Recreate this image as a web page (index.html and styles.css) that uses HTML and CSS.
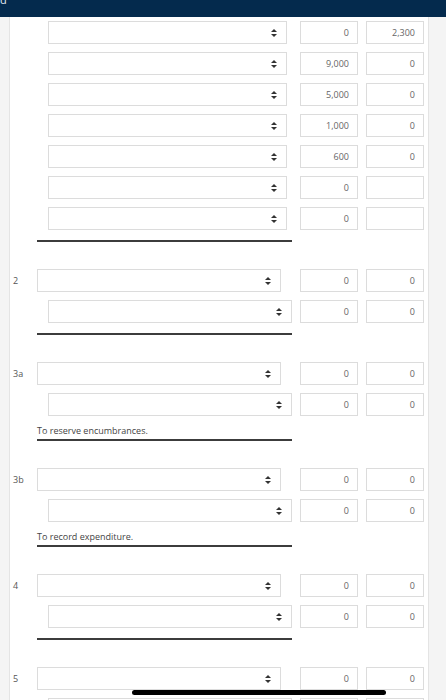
FILE: index.html
```html
<!DOCTYPE html>
<html lang="en">
<head>
<meta charset="utf-8">
<link rel="stylesheet" href="styles.css">
</head>
<body>
<header class="topbar"><span class="topglyph">d</span></header>
<main class="panel">
  <section class="block first">
    <div class="row"><div class="label"></div><div class="selcol"><div class="select sub narrow"><span class="arrow"></span></div></div><div class="inp">0</div><div class="inp">2,300</div></div>
    <div class="row"><div class="label"></div><div class="selcol"><div class="select sub narrow"><span class="arrow"></span></div></div><div class="inp">9,000</div><div class="inp">0</div></div>
    <div class="row"><div class="label"></div><div class="selcol"><div class="select sub narrow"><span class="arrow"></span></div></div><div class="inp">5,000</div><div class="inp">0</div></div>
    <div class="row"><div class="label"></div><div class="selcol"><div class="select sub narrow"><span class="arrow"></span></div></div><div class="inp">1,000</div><div class="inp">0</div></div>
    <div class="row"><div class="label"></div><div class="selcol"><div class="select sub narrow"><span class="arrow"></span></div></div><div class="inp">600</div><div class="inp">0</div></div>
    <div class="row"><div class="label"></div><div class="selcol"><div class="select sub narrow"><span class="arrow"></span></div></div><div class="inp">0</div><div class="inp"></div></div>
    <div class="row last"><div class="label"></div><div class="selcol"><div class="select sub narrow"><span class="arrow"></span></div></div><div class="inp">0</div><div class="inp"></div></div>
    <div class="foot"><div class="rule"></div></div>
  </section>

  <section class="block">
    <div class="row"><div class="label">2</div><div class="selcol"><div class="select"><span class="arrow"></span></div></div><div class="inp">0</div><div class="inp">0</div></div>
    <div class="row last"><div class="label"></div><div class="selcol"><div class="select sub"><span class="arrow"></span></div></div><div class="inp">0</div><div class="inp">0</div></div>
    <div class="foot"><div class="rule"></div></div>
  </section>

  <section class="block">
    <div class="row"><div class="label">3a</div><div class="selcol"><div class="select"><span class="arrow"></span></div></div><div class="inp">0</div><div class="inp">0</div></div>
    <div class="row last"><div class="label"></div><div class="selcol"><div class="select sub"><span class="arrow"></span></div></div><div class="inp">0</div><div class="inp">0</div></div>
    <div class="foot withtext"><p class="note">To reserve encumbrances.</p><div class="rule"></div></div>
  </section>

  <section class="block">
    <div class="row"><div class="label">3b</div><div class="selcol"><div class="select"><span class="arrow"></span></div></div><div class="inp">0</div><div class="inp">0</div></div>
    <div class="row last"><div class="label"></div><div class="selcol"><div class="select sub"><span class="arrow"></span></div></div><div class="inp">0</div><div class="inp">0</div></div>
    <div class="foot withtext"><p class="note">To record expenditure.</p><div class="rule"></div></div>
  </section>

  <section class="block">
    <div class="row"><div class="label">4</div><div class="selcol"><div class="select"><span class="arrow"></span></div></div><div class="inp">0</div><div class="inp">0</div></div>
    <div class="row last"><div class="label"></div><div class="selcol"><div class="select sub"><span class="arrow"></span></div></div><div class="inp">0</div><div class="inp">0</div></div>
    <div class="foot"><div class="rule"></div></div>
  </section>

  <section class="block">
    <div class="row"><div class="label">5</div><div class="selcol"><div class="select"><span class="arrow"></span></div></div><div class="inp">0</div><div class="inp">0</div></div>
    <div class="row last"><div class="label"></div><div class="selcol"><div class="select sub"><span class="arrow"></span></div></div><div class="inp"></div><div class="inp"></div></div>
  </section>
</main>
<div class="homebar"></div>
</body>
</html>
```

FILE: styles.css
```css
html, body {
  margin: 0;
  padding: 0;
  height: 700px;
  overflow: hidden;
}
body {
  background: #f4f4f4;
  font-family: "Open Sans", "Liberation Sans", Arial, sans-serif;
  font-size: 9px;
  color: #555;
}
.topbar {
  height: 17px;
  background: #042a4d;
  overflow: hidden;
}
.topglyph {
  display: block;
  color: #e9eef3;
  font-size: 11px;
  line-height: 11px;
  margin-top: -6px;
  margin-left: 0;
}
.panel {
  margin-left: 9px;
  width: 418px;
  background: #fff;
  border-left: 1px solid #e4e4e4;
  border-right: 1px solid #e4e4e4;
  padding-top: 4px;
  min-height: 700px;
}
.block {
  margin-bottom: 27px;
}
.row {
  display: flex;
  align-items: center;
  height: 23px;
  margin-bottom: 8px;
}
.row.last {
  margin-bottom: 0;
}
.label {
  flex: 0 0 24px;
  padding-left: 3px;
  color: #555;
  font-size: 9px;
}
.selcol {
  flex: 0 0 255px;
  height: 23px;
  margin-right: 8px;
}
.select {
  box-sizing: border-box;
  height: 23px;
  width: 244px;
  border: 1px solid #dcdcdc;
  background: #fff;
  display: flex;
  align-items: center;
  justify-content: flex-end;
  padding-right: 9px;
}
.select.sub {
  margin-left: 11px;
}
.select.narrow {
  width: 239px;
}
.arrow {
  position: relative;
  width: 6px;
  height: 8px;
}
.arrow::before,
.arrow::after {
  content: "";
  position: absolute;
  left: 0;
  width: 0;
  height: 0;
  border-left: 3px solid transparent;
  border-right: 3px solid transparent;
}
.arrow::before {
  top: 0;
  border-bottom: 3px solid #333;
}
.arrow::after {
  bottom: 0;
  border-top: 3px solid #333;
}
.inp {
  box-sizing: border-box;
  flex: 0 0 58px;
  height: 23px;
  border: 1px solid #dcdcdc;
  background: #fff;
  margin-right: 8px;
  text-align: right;
  padding-right: 8px;
  line-height: 21px;
  font-size: 9px;
  color: #666;
}
.inp:last-child {
  margin-right: 0;
}
.foot {
  margin-left: 27px;
  width: 255px;
  padding-top: 10px;
}
.foot.withtext {
  padding-top: 8px;
}
.note {
  margin: 0 0 1px 0;
  font-size: 9px;
  line-height: 14px;
  color: #444;
}
.rule {
  height: 2px;
  background: #3c3c3c;
}
.homebar {
  position: fixed;
  left: 132px;
  top: 690px;
  width: 254px;
  height: 5px;
  border-radius: 3px;
  background: #000;
}
```
